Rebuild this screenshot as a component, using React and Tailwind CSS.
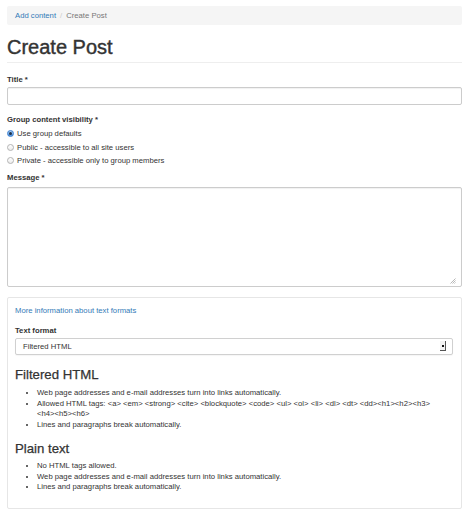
import React from "react";

const font = { fontFamily: '"Liberation Sans", Arial, Helvetica, sans-serif' };

function Radio({ checked, label }) {
  return (
    <div className="flex items-center h-[11px] leading-[11px]">
      {checked ? (
        <span className="w-[7px] h-[7px] rounded-full border border-[#3b7fcf] bg-[linear-gradient(#a9cdf3,#4f93df)] flex items-center justify-center">
          <span className="w-[2.5px] h-[2.5px] rounded-full bg-[#1b2f4a]" />
        </span>
      ) : (
        <span className="w-[7px] h-[7px] rounded-full border border-[#b3b3b3] bg-[linear-gradient(#ffffff,#ececec)]" />
      )}
      <span className="ml-[3px]">{label}</span>
    </div>
  );
}

export default function App() {
  return (
    <div className="bg-white min-h-[519px] text-[#333] text-[7.7px] leading-[11px]" style={font}>
      <div className="w-[455px] ml-[7px] pt-[6px] pb-[13px]">
        {/* Breadcrumb */}
        <div className="h-[19px] bg-[#f5f5f5] rounded-[2px] px-[8px] flex items-center leading-[11px]">
          <span className="text-[#337ab7]">Add content</span>
          <span className="text-[#ccc] px-[4px]">/</span>
          <span className="text-[#777]">Create Post</span>
        </div>

        {/* Heading */}
        <h1 className="mt-[10px] text-[20px] leading-[24px] font-medium pb-[3px] border-b border-[#eeeeee] text-[#333] [-webkit-text-stroke:0.4px_#333]">
          Create Post
        </h1>

        {/* Title */}
        <div className="mt-[11px] font-bold leading-[11px]">Title *</div>
        <div className="mt-[2px] h-[18px] border border-[#cccccc] rounded-[2px] bg-white shadow-[inset_0_1px_1px_rgba(0,0,0,0.06)]" />

        {/* Visibility */}
        <div className="mt-[9px] font-bold leading-[11px]">Group content visibility *</div>
        <div className="mt-[3px] flex flex-col gap-[2.5px]">
          <Radio checked label="Use group defaults" />
          <Radio label="Public - accessible to all site users" />
          <Radio label="Private - accessible only to group members" />
        </div>

        {/* Message */}
        <div className="mt-[6px] font-bold leading-[11px]">Message *</div>
        <div className="relative mt-[3.5px] h-[100px] border border-[#cccccc] rounded-[2px] bg-white shadow-[inset_0_1px_1px_rgba(0,0,0,0.06)]">
          <svg className="absolute right-[5px] bottom-[2px]" width="6" height="6" viewBox="0 0 6 6">
            <line x1="0.5" y1="5.5" x2="5.5" y2="0.5" stroke="#999" strokeWidth="0.7" />
            <line x1="2.5" y1="5.5" x2="5.5" y2="2.5" stroke="#999" strokeWidth="0.7" />
            <line x1="4.5" y1="5.5" x2="5.5" y2="4.5" stroke="#999" strokeWidth="0.7" />
          </svg>
        </div>

        {/* Filter box */}
        <div className="mt-[10px] border border-[#e6e6e6] rounded-[2px] pl-[7px] pr-[8px] pt-[7px] pb-[15px]">
          <div className="text-[#337ab7] leading-[11px]">More information about text formats</div>
          <div className="mt-[9px] font-bold leading-[11px]">Text format</div>
          <div className="mt-[2px] h-[17.5px] border border-[#d0d0d0] rounded-[2px] bg-white flex items-center justify-between pl-[7px] pr-[6px] shadow-[0_1px_1px_rgba(0,0,0,0.04)]">
            <span>Filtered HTML</span>
            <span className="w-[6px] h-[10px] bg-[#f2f2f2] border-r border-b border-[#555] flex items-center justify-center">
              <span className="w-[2px] h-[2px] bg-[#111]" />
            </span>
          </div>

          <h3 className="mt-[12px] text-[13.2px] leading-[15px] font-medium text-[#333] [-webkit-text-stroke:0.25px_#333]">Filtered HTML</h3>
          <ul className="mt-[6px] list-disc pl-[22px] leading-[10.5px]">
            <li>Web page addresses and e-mail addresses turn into links automatically.</li>
            <li>
              <span className="whitespace-nowrap">
                Allowed HTML tags: &lt;a&gt; &lt;em&gt; &lt;strong&gt; &lt;cite&gt; &lt;blockquote&gt; &lt;code&gt; &lt;ul&gt; &lt;ol&gt; &lt;li&gt; &lt;dl&gt; &lt;dt&gt; &lt;dd&gt;&lt;h1&gt;&lt;h2&gt;&lt;h3&gt;
              </span>
              <br />
              &lt;h4&gt;&lt;h5&gt;&lt;h6&gt;
            </li>
            <li>Lines and paragraphs break automatically.</li>
          </ul>

          <h3 className="mt-[11px] text-[13.2px] leading-[15px] font-medium text-[#333] [-webkit-text-stroke:0.25px_#333]">Plain text</h3>
          <ul className="mt-[5px] list-disc pl-[22px] leading-[10.7px]">
            <li>No HTML tags allowed.</li>
            <li>Web page addresses and e-mail addresses turn into links automatically.</li>
            <li>Lines and paragraphs break automatically.</li>
          </ul>
        </div>
      </div>
    </div>
  );
}
